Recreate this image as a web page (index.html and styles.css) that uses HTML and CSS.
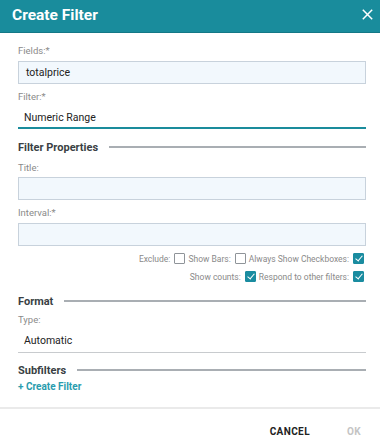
FILE: index.html
```html
<!DOCTYPE html>
<html lang="en">

<head>
    <meta charset="UTF-8">
    <meta name="viewport" content="width=device-width, initial-scale=1.0">
    <title>Create Filter</title>
    <link rel="stylesheet" href="styles.css">
</head>

<body>
    <div class="dialog">
        <div class="head">
            <h1>Create Filter</h1>
            <span class="close">
                <svg width="11" height="11" viewBox="0 0 11 11">
                    <path d="M0.8 0.8L10.2 10.2M10.2 0.8L0.8 10.2" stroke="#fff" stroke-width="1.5" fill="none" />
                </svg>
            </span>
        </div>
        <div class="content">
            <label class="lab first">Fields:*</label>
            <div class="box">totalprice</div>

            <label class="lab gap">Filter:*</label>
            <div class="pick teal">Numeric Range</div>

            <div class="sect s1"><b>Filter Properties</b><i></i></div>

            <label class="lab small">Title:</label>
            <div class="box"></div>

            <label class="lab gap2">Interval:*</label>
            <div class="box"></div>

            <div class="checks c1">
                <span>Exclude:</span><em class="cb"></em>
                <span>Show Bars:</span><em class="cb"></em>
                <span>Always Show Checkboxes:</span><em class="cb on"></em>
            </div>
            <div class="checks c2">
                <span>Show counts:</span><em class="cb on"></em>
                <span>Respond to other filters:</span><em class="cb on"></em>
            </div>

            <div class="sect s2"><b>Format</b><i></i></div>

            <label class="lab type">Type:</label>
            <div class="pick grey">Automatic</div>

            <div class="sect s3"><b>Subfilters</b><i></i></div>
            <a class="add" href="#">+ Create Filter</a>
        </div>
        <div class="foot">
            <button class="cancel">CANCEL</button>
            <button class="ok">OK</button>
        </div>
    </div>
</body>

</html>
```

FILE: styles.css
```css
* {
    margin: 0;
    padding: 0;
    box-sizing: border-box;
}

body {
    font-family: Roboto, "Liberation Sans", Arial, sans-serif;
    background: #fff;
}

a {
    text-decoration: none;
}

button {
    border: 0;
    outline: none;
    background: none;
    font-family: Roboto, "Liberation Sans", Arial, sans-serif;
    cursor: pointer;
}

em {
    font-style: normal;
}

.dialog {
    width: 380px;
    height: 447px;
}

.head {
    height: 33px;
    background-color: #198c9c;
    display: flex;
    align-items: center;
    justify-content: space-between;
    padding: 0 7px 3px 12px;
    border-bottom: 1px solid #147886;
}

.head h1 {
    color: #fff;
    font-size: 15.5px;
    line-height: 18px;
    font-weight: 700;
}

.close {
    width: 11px;
    height: 11px;
    display: flex;
}

/* padding-top instead of a margin on the first label, so it doesn't collapse out */
.content {
    padding: 12px 14px 0 18px;
    height: 376px;
    border-bottom: 2px solid #eaeaea;
}

.lab {
    display: block;
    font-size: 9.5px;
    line-height: 12px;
    color: #8a8a8a;
}

.first {
    margin-bottom: 4px;
}

.gap {
    margin-top: 7px;
}

.small {
    margin-top: 8px;
    margin-bottom: 3px;
}

.gap2 {
    margin-top: 7px;
    margin-bottom: 4px;
}

.type {
    margin-top: 6px;
}

.box {
    height: 23px;
    background: #f2f8fd;
    border: 1px solid #c8d2dc;
    font-size: 10.5px;
    line-height: 21px;
    padding-left: 7px;
    color: #222;
}

.pick {
    font-size: 10.5px;
    line-height: 18px;
    padding: 6px 0 0 6px;
    color: #222;
}

.teal {
    height: 26px;
    border-bottom: 2px solid #1a8c9c;
}

.grey {
    height: 27px;
    border-bottom: 1px solid #c8cbce;
}

.sect {
    display: flex;
    align-items: center;
    height: 14px;
}

.sect b {
    font-size: 11px;
    color: #3a3f44;
    font-weight: 700;
}

.sect i {
    flex: 1;
    height: 2px;
    background: #a9aeb3;
    margin-left: 11px;
}

.s1 {
    margin-top: 11px;
}

.s2 {
    margin-top: 11px;
}

.s3 {
    margin-top: 10px;
}

.checks {
    display: flex;
    justify-content: flex-end;
    align-items: center;
    height: 13px;
    font-size: 8.5px;
    color: #8a8a8a;
    padding-right: 2px;
}

.c1 {
    margin-top: 6px;
}

.c2 {
    margin-top: 5px;
}

.checks span {
    margin-right: 4px;
}

.cb {
    width: 11px;
    height: 11px;
    border: 1px solid #8f9499;
    border-radius: 1px;
    margin-right: 3px;
    position: relative;
}

.checks .cb:last-child {
    margin-right: 0;
}

.cb.on {
    background: #1a8ca0;
    border-color: #1a8ca0;
}

.cb.on:after {
    content: "";
    position: absolute;
    left: 3px;
    top: 0px;
    width: 3px;
    height: 6px;
    border-right: 1.3px solid #fff;
    border-bottom: 1.3px solid #fff;
    transform: rotate(40deg);
}

.add {
    display: block;
    margin-top: 4px;
    font-size: 10px;
    font-weight: 700;
    color: #2a9cae;
    line-height: 12px;
}

.foot {
    height: 37px;
    display: flex;
    justify-content: flex-end;
    align-items: center;
    padding: 8px 19px 0 0;
}

.foot button {
    font-size: 10px;
    line-height: 12px;
    font-weight: 700;
    letter-spacing: 0.4px;
}

.cancel {
    color: #222;
    margin-right: 37px;
}

.ok {
    color: #c4c4c4;
}
```
